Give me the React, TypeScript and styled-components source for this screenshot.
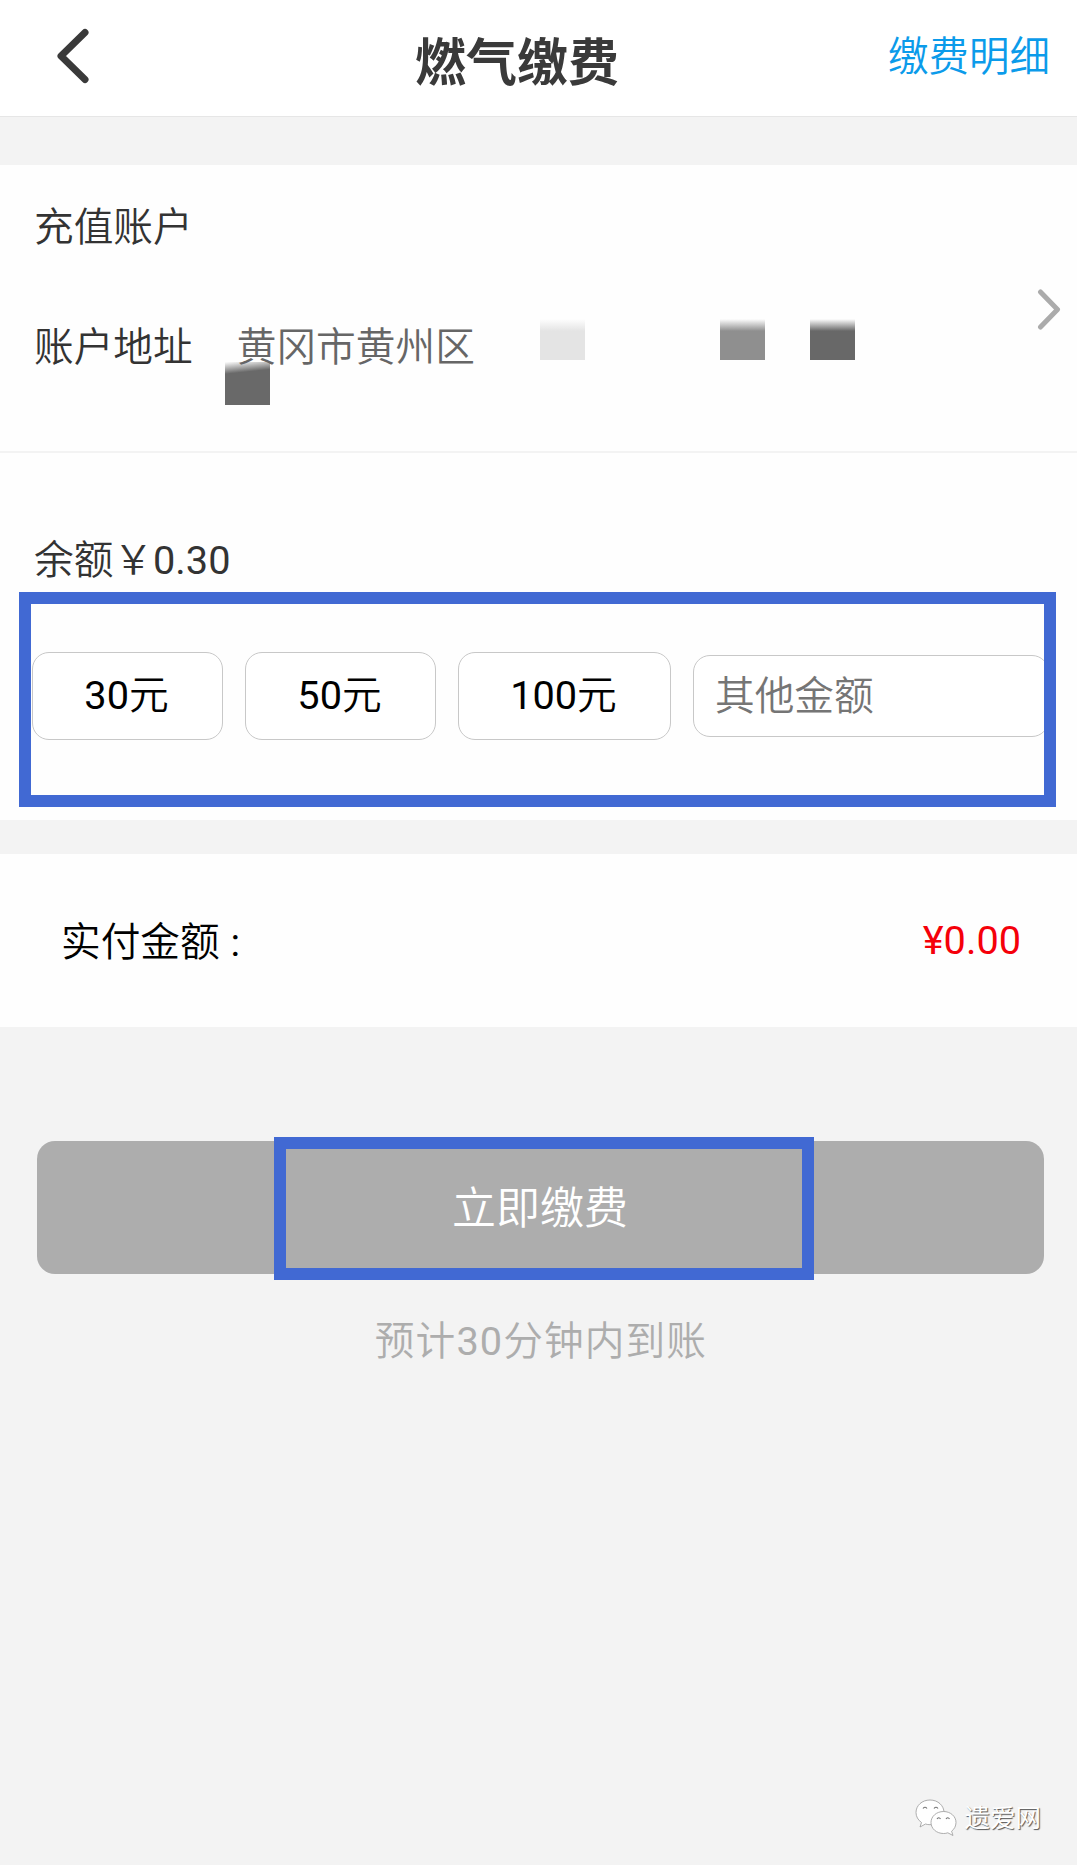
import React from 'react';
import styled, { createGlobalStyle } from 'styled-components';

const GlobalStyle = createGlobalStyle`
  *, *::before, *::after { box-sizing: border-box; }
  body {
    margin: 0;
    background: #f3f3f3;
    font-family: Roboto, "Noto Sans CJK SC", sans-serif;
    font-size: 39.7px;
    font-weight: 350;
    line-height: 60px;
    color: #333;
  }
  button, input { font: inherit; color: inherit; margin: 0; }
`;

const Page = styled.div`
  width: 1077px;
  height: 1865px;
  display: flex;
  flex-direction: column;
  overflow: hidden;
`;

const Num = styled.span`
  font-weight: 400;
`;

const Header = styled.header`
  height: 117px;
  flex: none;
  display: grid;
  grid-template-columns: 359px auto 1fr;
  align-items: start;
  padding: 0 27px 0 56px;
  background: #fff;
  border-bottom: 1px solid #e6e6e6;
`;

const BackButton = styled.button`
  display: flex;
  justify-self: start;
  padding: 28px 0 0;
  border: 0;
  background: none;
`;

const Title = styled.h1`
  margin: 32px 0 0;
  font-size: 51px;
  font-weight: 700;
  line-height: 64px;
  color: #3a3a3a;
`;

const DetailLink = styled.a`
  justify-self: end;
  margin-top: 27px;
  font-size: 40.5px;
  color: #0b9bea;
`;

const Account = styled.section`
  height: 288px;
  flex: none;
  margin-top: 48px;
  display: flex;
  justify-content: space-between;
  padding: 33px 14px 0 34px;
  background: #fefefe;
  border-bottom: 2px solid #f3f3f3;
`;

const Fields = styled.div`
  display: flex;
  flex-direction: column;
  gap: 60px;
`;

const Field = styled.div`
  display: flex;
  gap: 44px;
`;

const Label = styled.span`
  color: #333;
`;

const Address = styled.span`
  position: relative;
  color: #666;
`;

const Mask = styled.i<{ $x: number; $y: number; $h: number; $tone: string; $angle?: number }>`
  position: absolute;
  left: ${(p) => p.$x}px;
  top: ${(p) => p.$y}px;
  width: 45px;
  height: ${(p) => p.$h}px;
  background: linear-gradient(${(p) => p.$angle ?? 180}deg, transparent, ${(p) => p.$tone} 12px);
`;

const Arrow = styled.svg`
  margin-top: 89px;
  flex: none;
`;

const Recharge = styled.section`
  height: 367px;
  flex: none;
  padding: 78px 0 0 32px;
  background: #fefefe;
`;

const Balance = styled.div`
  padding-left: 2px;
`;

const Amounts = styled.div`
  position: relative;
  display: flex;
  align-items: center;
  gap: 22px;
  margin-top: 61px;
`;

const AmountButton = styled.button<{ $width: number }>`
  width: ${(p) => p.$width}px;
  height: 88px;
  padding: 0 2px 0 0;
  border: 1px solid #c8c8c8;
  border-radius: 17px;
  background: #fff;
  color: #000;
`;

const AmountInput = styled.input`
  width: 356px;
  height: 82px;
  padding: 1px 21px 0;
  border: 1px solid #c8c8c8;
  border-radius: 17px;
  background: #fff;
  &::placeholder { color: #757575; opacity: 1; }
`;

const Highlight = styled.div<{ $x: number; $y: number; $w: number; $h: number }>`
  position: absolute;
  left: ${(p) => p.$x}px;
  top: ${(p) => p.$y}px;
  width: ${(p) => p.$w}px;
  height: ${(p) => p.$h}px;
  border: 12px solid #4169d3;
  pointer-events: none;
`;

const Total = styled.section`
  height: 173px;
  flex: none;
  margin-top: 34px;
  display: flex;
  align-items: center;
  justify-content: space-between;
  padding: 0 56px 0 61px;
  background: #fefefe;
  color: #000;
`;

const TotalLabel = styled.span`
  padding-top: 4px;
  word-spacing: 1px;
`;

const Price = styled(Num)`
  color: #f5000a;
`;

const PayArea = styled.div`
  position: relative;
  flex: none;
  margin: 114px 33px 0 37px;
`;

const PayButton = styled.button`
  display: block;
  width: 100%;
  height: 133px;
  padding: 3px 1px 0 0;
  border: 0;
  border-radius: 18px;
  background: #adadad;
  color: #fff;
  font-size: 44px;
`;

const Hint = styled.p`
  margin: 38px 0 0;
  padding-left: 5px;
  text-align: center;
  color: #adadad;
  letter-spacing: 1.1px;
`;

const Watermark = styled.footer`
  margin: auto 36px 27px 0;
  align-self: flex-end;
  display: flex;
  align-items: center;
  gap: 7px;
  font-size: 25.5px;
  font-weight: 400;
  line-height: 40px;
  color: #fff;
  text-shadow: 1px 1px 1px #555;
`;

export default function App() {
  return (
    <>
      <GlobalStyle />
      <Page>
        <Header>
          <BackButton aria-label="返回">
            <svg width="34" height="56" viewBox="0 0 34 56" fill="none" stroke="#3a3a3a" strokeWidth="7" strokeLinecap="round" strokeLinejoin="round">
              <path d="M29 4.500 5 28 29 51.500" />
            </svg>
          </BackButton>
          <Title>燃气缴费</Title>
          <DetailLink>缴费明细</DetailLink>
        </Header>

        <Account>
          <Fields>
            <Field><Label>充值账户</Label></Field>
            <Field>
              <Label>账户地址</Label>
              <Address>
                黄冈市黄州区
                <Mask $x={-12} $y={44} $h={43} $tone="#696969" $angle={174} />
                <Mask $x={303} $y={1} $h={41} $tone="#e4e4e4" />
                <Mask $x={483} $y={1} $h={41} $tone="#8f8f8f" />
                <Mask $x={573} $y={1} $h={41} $tone="#686868" />
              </Address>
            </Field>
          </Fields>
          <Arrow width="26" height="44" viewBox="0 0 26 44" fill="none" stroke="#ababab" strokeWidth="5" strokeLinecap="round" strokeLinejoin="round">
            <path d="M3.500 5 20.500 22.500 3.500 40" />
          </Arrow>
        </Account>

        <Recharge>
          <Balance>余额{'\uFFE5'}<Num>0.30</Num></Balance>
          <Amounts>
            <AmountButton $width={191}><Num>30</Num>元</AmountButton>
            <AmountButton $width={191}><Num>50</Num>元</AmountButton>
            <AmountButton $width={213}><Num>100</Num>元</AmountButton>
            <AmountInput placeholder="其他金额" />
            <Highlight $x={-13} $y={-60} $w={1037} $h={215} />
          </Amounts>
        </Recharge>

        <Total>
          <TotalLabel>实付金额 <Num>:</Num></TotalLabel>
          <Price>¥0.00</Price>
        </Total>

        <PayArea>
          <PayButton>立即缴费</PayButton>
          <Highlight $x={237} $y={-4} $w={540} $h={143} />
        </PayArea>
        <Hint>预计<Num>30</Num>分钟内到账</Hint>

        <Watermark>
          <svg width="42" height="38" viewBox="0 0 42 38" fill="#fff" stroke="#999" strokeWidth="0.8">
            <path d="M15 1C7 1 1 6.500 1 13.500c0 4 2 7.500 5.500 10L5 28l5.500-3c1.500.5 3 .7 4.500.7 8 0 14-5.400 14-12.200S23 1 15 1Z" />
            <path d="M28.500 12.500c-7 0-12.500 4.900-12.500 11s5.500 11 12.500 11c1.600 0 3-.2 4.300-.7L38 36.500l-1.400-4.300c2.700-2 4.400-5.200 4.400-8.700 0-6.100-5.500-11-12.500-11Z" />
            <path d="M8 9.500q2-2.500 4 0M19 9.500q2-2.500 4 0M22 20q2-2.500 3.500 0M31 20q2-2.500 3.500 0" fill="none" stroke="#777" strokeWidth="1.200" />
          </svg>
          <span>遗爱网</span>
        </Watermark>
      </Page>
    </>
  );
}
